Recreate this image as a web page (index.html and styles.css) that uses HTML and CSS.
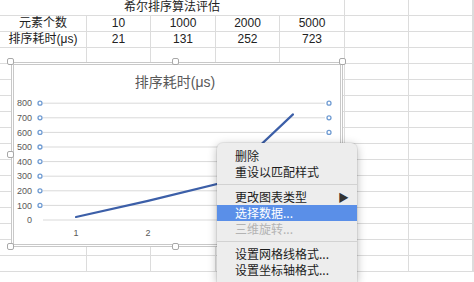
FILE: index.html
```html
<!DOCTYPE html>
<html lang="zh-CN">
<head>
  <meta charset="UTF-8" />
  <title>希尔排序算法评估</title>
  <link rel="stylesheet" href="styles.css">
</head>
<body>
  <div class="sheet">
    <div class="row"><span class="title">希尔排序算法评估</span><span></span><span></span><span></span></div>
    <div class="row"><span>元素个数</span><span>10</span><span>1000</span><span>2000</span><span>5000</span><span></span><span></span><span></span></div>
    <div class="row"><span>排序耗时(μs)</span><span>21</span><span>131</span><span>252</span><span>723</span><span></span><span></span><span></span></div>
    <div class="row"><span></span><span></span><span></span><span></span><span></span><span></span><span></span><span></span></div>
    <div class="row"><span></span><span></span><span></span><span></span><span></span><span></span><span></span><span></span></div>
    <div class="row"><span></span><span></span><span></span><span></span><span></span><span></span><span></span><span></span></div>
    <div class="row"><span></span><span></span><span></span><span></span><span></span><span></span><span></span><span></span></div>
    <div class="row"><span></span><span></span><span></span><span></span><span></span><span></span><span></span><span></span></div>
    <div class="row"><span></span><span></span><span></span><span></span><span></span><span></span><span></span><span></span></div>
    <div class="row"><span></span><span></span><span></span><span></span><span></span><span></span><span></span><span></span></div>
    <div class="row"><span></span><span></span><span></span><span></span><span></span><span></span><span></span><span></span></div>
    <div class="row"><span></span><span></span><span></span><span></span><span></span><span></span><span></span><span></span></div>
    <div class="row"><span></span><span></span><span></span><span></span><span></span><span></span><span></span><span></span></div>
    <div class="row"><span></span><span></span><span></span><span></span><span></span><span></span><span></span><span></span></div>
    <div class="row"><span></span><span></span><span></span><span></span><span></span><span></span><span></span><span></span></div>
    <div class="row"><span></span><span></span><span></span><span></span><span></span><span></span><span></span><span></span></div>
    <div class="row"><span></span><span></span><span></span><span></span><span></span><span></span><span></span><span></span></div>
  </div>

  <div class="chart">
    <svg class="plot" width="326" height="179" viewBox="14 65 326 179">
      <text class="chart-title" x="175" y="87">排序耗时(μs)</text>
      <g class="grid">
        <line x1="43" y1="103.2" x2="325" y2="103.2" />
        <line x1="43" y1="117.8" x2="325" y2="117.8" />
        <line x1="43" y1="132.4" x2="325" y2="132.4" />
        <line x1="43" y1="147" x2="325" y2="147" />
        <line x1="43" y1="161.6" x2="325" y2="161.6" />
        <line x1="43" y1="176.2" x2="325" y2="176.2" />
        <line x1="43" y1="190.8" x2="325" y2="190.8" />
        <line x1="43" y1="205.4" x2="325" y2="205.4" />
        <line x1="43" y1="220" x2="325" y2="220" />
      </g>
      <g class="ylabels">
        <text x="32" y="106.4">800</text>
        <text x="32" y="121">700</text>
        <text x="32" y="135.6">600</text>
        <text x="32" y="150.2">500</text>
        <text x="32" y="164.8">400</text>
        <text x="32" y="179.4">300</text>
        <text x="32" y="194">200</text>
        <text x="32" y="208.6">100</text>
        <text x="32" y="223.2">0</text>
      </g>
      <g class="marks">
        <circle cx="40" cy="103.2" r="2" />
        <circle cx="40" cy="117.8" r="2" />
        <circle cx="40" cy="132.4" r="2" />
        <circle cx="40" cy="147" r="2" />
        <circle cx="40" cy="161.6" r="2" />
        <circle cx="40" cy="176.2" r="2" />
        <circle cx="40" cy="190.8" r="2" />
        <circle cx="40" cy="205.4" r="2" />
        <circle cx="329" cy="103.2" r="2" />
        <circle cx="329" cy="117.8" r="2" />
        <circle cx="329" cy="132.4" r="2" />
        <circle cx="329" cy="147" r="2" />
        <circle cx="329" cy="161.6" r="2" />
        <circle cx="329" cy="176.2" r="2" />
        <circle cx="329" cy="190.8" r="2" />
        <circle cx="329" cy="205.4" r="2" />
      </g>
      <polyline class="series" points="76,217 148,200.9 220,183.2 293,114.4" />
      <!-- labels 3 and 4 sit under the context menu -->
      <g class="xlabels">
        <text x="76" y="235.5">1</text>
        <text x="148" y="235.5">2</text>
      </g>
    </svg>
    <i class="handle h-tl"></i>
    <i class="handle h-tm"></i>
    <i class="handle h-tr"></i>
    <i class="handle h-ml"></i>
    <i class="handle h-bl"></i>
    <i class="handle h-bm"></i>
  </div>

  <ul class="menu">
    <li>删除</li>
    <li>重设以匹配样式</li>
    <li class="sep"></li>
    <li class="sub">更改图表类型<b>&#9654;</b></li>
    <li class="active">选择数据...</li>
    <li class="disabled">三维旋转...</li>
    <li class="sep"></li>
    <li>设置网格线格式...</li>
    <li>设置坐标轴格式...</li>
  </ul>
</body>
</html>
```

FILE: styles.css
```css
body { margin: 0; background: #fff; font-family: "Liberation Sans", "Noto Sans CJK SC", sans-serif; font-size: 12px; color: #222; position: relative; height: 282px; overflow: hidden; }

.sheet { width: 474px; height: 282px; overflow: hidden; }
.row { display: grid; grid-template-columns: 87px 64px 65px 64px 65px 64px 64px 1fr; height: 16px; }
.row span { box-sizing: border-box; border-right: 1px solid #dcdcdc; border-bottom: 1px solid #dcdcdc; display: flex; align-items: center; justify-content: center; line-height: 15px; white-space: nowrap; overflow: hidden; }
.row .title { grid-column: 1 / 6; }

.chart { position: absolute; left: 11px; top: 62px; width: 332px; height: 185px; box-sizing: border-box; border: 3px double #c8c8c8; background: #fff; }
.plot { display: block; font-family: "Liberation Sans", "Noto Sans CJK SC", sans-serif; }
.chart-title { font-size: 14px; fill: #595959; text-anchor: middle; }
.grid line { stroke: #d9d9d9; stroke-width: 1; }
.ylabels text { font-size: 9px; fill: #595959; text-anchor: end; }
.xlabels text { font-size: 9px; fill: #595959; text-anchor: middle; }
.marks circle { fill: #fff; stroke: #6f9bd2; stroke-width: 1.3; }
.series { fill: none; stroke: #3c5fa8; stroke-width: 2.2; stroke-linecap: round; }

.handle { position: absolute; width: 7px; height: 7px; box-sizing: border-box; border: 1px solid #a8a8a8; border-radius: 2px; background: #fff; }
.h-tl { left: -7px; top: -7px; }
.h-tm { left: 158px; top: -7px; }
.h-tr { left: 325px; top: -7px; }
.h-ml { left: -7px; top: 86px; }
.h-bl { left: -7px; top: 178px; }
.h-bm { left: 158px; top: 178px; }

.menu { position: absolute; left: 217px; top: 143px; bottom: 0; width: 140px; margin: 0; padding: 5px 0 0; box-sizing: border-box; list-style: none; background: #ededed; border-radius: 6px 6px 0 0; box-shadow: 0 2px 10px rgba(0,0,0,0.28), 0 0 0 1px rgba(0,0,0,0.06); font-family: "Noto Sans CJK SC", sans-serif; font-size: 12px; color: #1c1c1c; }
.menu li { height: 16px; line-height: 16px; padding-left: 18px; white-space: nowrap; }
.menu .sep { height: 1px; padding: 0; margin: 4px 0; background: #d2d2d2; }
.menu .sub { display: flex; justify-content: space-between; padding-right: 8px; }
.menu .sub b { font-weight: normal; font-size: 11px; color: #333; }
.menu .active { background: #5a8fe8; color: #fff; }
.menu .disabled { color: #b3b3b3; }
```
